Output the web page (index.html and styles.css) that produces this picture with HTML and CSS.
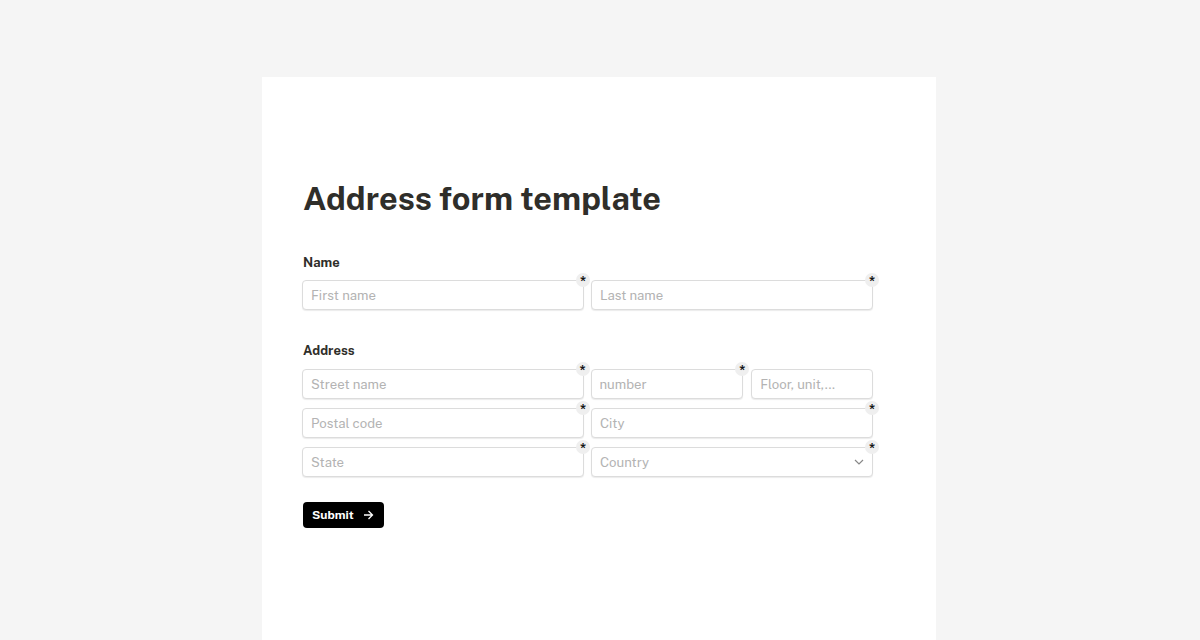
FILE: index.html
```html
<!DOCTYPE html>
<html>
<head>
<meta charset="utf-8">
<link rel="stylesheet" href="styles.css">
</head>
<body>
<main class="card">
  <h1 class="title">Address form template</h1>
  <form class="form">
    <section class="group">
      <div class="label">Name</div>
      <div class="row">
        <div class="field w-half req"><input placeholder="First name"></div>
        <div class="field w-half req"><input placeholder="Last name"></div>
      </div>
    </section>
    <section class="group">
      <div class="label">Address</div>
      <div class="rows">
        <div class="row">
          <div class="field w-half req"><input placeholder="Street name"></div>
          <div class="field w-num req"><input placeholder="number"></div>
          <div class="field w-floor"><input placeholder="Floor, unit,..."></div>
        </div>
        <div class="row">
          <div class="field w-half req"><input placeholder="Postal code"></div>
          <div class="field w-half req"><input placeholder="City"></div>
        </div>
        <div class="row">
          <div class="field w-half req"><input placeholder="State"></div>
          <div class="field w-half req select"><div class="fake">Country</div>
            <svg class="chev" width="10" height="6" viewBox="0 0 10 6"><path d="M1 1l4 4 4-4" fill="none" stroke="#888" stroke-width="1.2"/></svg>
          </div>
        </div>
      </div>
    </section>
    <button type="button" class="submit">Submit
      <svg width="11" height="10" viewBox="0 0 11 10"><path d="M1 5h8.5M5.5 1l4 4-4 4" fill="none" stroke="#fff" stroke-width="1.3"/></svg>
    </button>
  </form>
</main>
</body>
</html>
```

FILE: styles.css
```css
html, body { margin: 0; padding: 0; }
body {
  background: #f5f5f5;
  font-family: "Public Sans", Inter, "Liberation Sans", sans-serif;
  height: 640px;
  overflow: hidden;
}
.card {
  margin: 77px 0 0 262px;
  width: 674px;
  height: 563px;
  background: #fff;
  box-sizing: border-box;
  padding: 101px 0 0 40px;
}
.title {
  margin: 0 0 0 1px;
  font-size: 32.5px;
  line-height: 40px;
  font-weight: 700;
  color: #2f2e2a;
  letter-spacing: 0;
}
.form { margin-top: 37px; }
.group { margin-bottom: 33px; }
.group + .group { margin-bottom: 25px; }
.label {
  font-size: 13px;
  font-weight: 700;
  color: #2f2e2a;
  line-height: 16px;
  margin: 0 0 9px 1px;
}
.group + .group .label { margin-bottom: 10px; }
.rows { display: flex; flex-direction: column; gap: 9px; }
.row { display: flex; gap: 7px; width: 571px; }
.field { position: relative; height: 30px; }
.w-half { width: 282px; }
.w-num { width: 153px; }
.w-floor { width: 122px; margin-left: 1px; }
.field input, .field .fake {
  width: 100%;
  height: 100%;
  box-sizing: border-box;
  border: 1px solid #dcdcdc;
  border-radius: 4px;
  box-shadow: 0 1px 1px rgba(0,0,0,0.08);
  padding: 0 8px;
  font-family: inherit;
  font-size: 13.2px;
  color: #333;
  background: #fff;
  outline: none;
}
.field .fake { display: flex; align-items: center; color: #b3b3b3; }
.field input::placeholder { color: #b3b3b3; }
.req::after {
  content: "*";
  position: absolute;
  right: -6px;
  top: -7px;
  width: 14px;
  height: 14px;
  border-radius: 50%;
  background: #efefef;
  color: #111;
  font-size: 13px;
  font-weight: 700;
  line-height: 17px;
  text-align: center;
}
.chev { position: absolute; right: 9px; top: 12px; }
.submit {
  display: flex;
  align-items: center;
  gap: 9px;
  height: 26px;
  margin-left: 1px;
  padding: 0 10px 0 9px;
  background: #000;
  color: #fff;
  border: none;
  border-radius: 4px;
  font-family: inherit;
  font-size: 12px;
  font-weight: 700;
}
```
